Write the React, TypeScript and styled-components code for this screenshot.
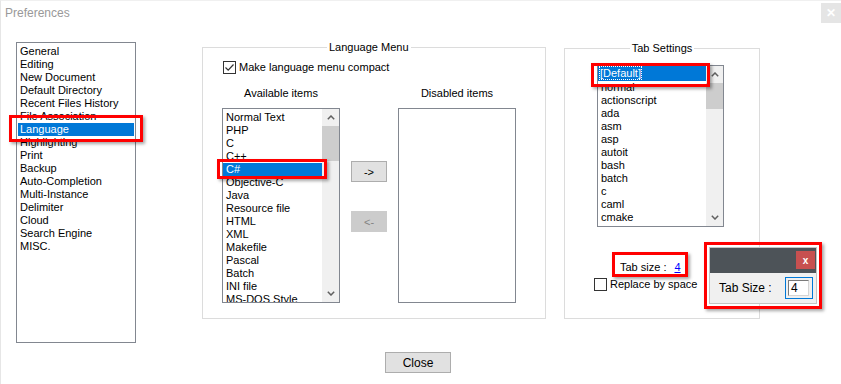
import styled, { createGlobalStyle } from 'styled-components';

const GlobalStyle = createGlobalStyle`
  html, body {
    margin: 0;
    padding: 0;
    background: #ffffff;
  }
  body {
    font-family: 'Liberation Sans', Arial, sans-serif;
    font-size: 11px;
    color: #000000;
  }
`;

const Window = styled.div`
  position: relative;
  width: 841px;
  height: 384px;
  background: #ffffff;
  box-sizing: border-box;
  border-left: 1px solid #e6e6e6;
  border-top: 1px solid #f0f0f0;
  overflow: hidden;
`;

const TitleBar = styled.div`
  display: flex;
  justify-content: space-between;
  align-items: flex-start;
  height: 39px;
  padding: 2px 0 0 4px;
  box-sizing: border-box;
`;

const TitleText = styled.span`
  font-size: 12px;
  line-height: 20px;
  color: #999999;
`;

const WinClose = styled.div`
  width: 20px;
  height: 20px;
  background: #e5e5e5;
  display: flex;
  align-items: center;
  justify-content: center;
  color: #ffffff;
  font-weight: 700;
  font-size: 12px;
`;

const Content = styled.div`
  display: flex;
  align-items: flex-start;
  padding-left: 15px;
`;

const ListBox = styled.div<{ $w: number; $h: number; $mt?: number; $ml?: number }>`
  width: ${(p) => p.$w}px;
  height: ${(p) => p.$h}px;
  margin-top: ${(p) => p.$mt ?? 0}px;
  margin-left: ${(p) => p.$ml ?? 0}px;
  border: 1px solid #828790;
  box-sizing: border-box;
  background: #ffffff;
  display: flex;
  overflow: hidden;
  flex-shrink: 0;
`;

const Items = styled.div<{ $pt: number; $px: number }>`
  flex: 1;
  padding: ${(p) => p.$pt}px ${(p) => p.$px}px 0;
  min-width: 0;
`;

const Item = styled.div<{ $sel?: boolean; $pl: number; $h?: number }>`
  height: ${(p) => p.$h ?? 13}px;
  line-height: ${(p) => p.$h ?? 13}px;
  padding-left: ${(p) => p.$pl}px;
  white-space: nowrap;
  background: ${(p) => (p.$sel ? '#0078d7' : 'transparent')};
  color: ${(p) => (p.$sel ? '#ffffff' : '#000000')};
`;

const FocusText = styled.span`
  outline: 1px dotted #ffffff;
  outline-offset: 0;
`;

const ScrollBar = styled.div`
  width: 17px;
  background: #f0f0f0;
  display: flex;
  flex-direction: column;
  flex-shrink: 0;
`;

const ScrollArrow = styled.div`
  height: 17px;
  display: flex;
  align-items: center;
  justify-content: center;
  flex-shrink: 0;
`;

const ScrollTrack = styled.div`
  flex: 1;
`;

const ScrollThumb = styled.div<{ $h: number }>`
  height: ${(p) => p.$h}px;
  background: #cdcdcd;
`;

const GroupBox = styled.fieldset<{ $w: number; $h: number; $ml: number; $mt: number }>`
  width: ${(p) => p.$w}px;
  height: ${(p) => p.$h}px;
  margin: ${(p) => p.$mt}px 0 0 ${(p) => p.$ml}px;
  padding: 0;
  border: 1px solid #dcdcdc;
  box-sizing: border-box;
  min-width: 0;
  flex-shrink: 0;
`;

const Legend = styled.legend<{ $ml?: number }>`
  padding: 0 2px;
  line-height: 13px;
  font-size: 11px;
  margin-left: ${(p) => (p.$ml !== undefined ? `${p.$ml}px` : 'auto')};
  margin-right: auto;
`;

const CheckRow = styled.label<{ $mt: number; $ml: number }>`
  display: flex;
  align-items: center;
  gap: 3px;
  height: 13px;
  line-height: 13px;
  margin: ${(p) => p.$mt}px 0 0 ${(p) => p.$ml}px;
  white-space: nowrap;
`;

const CheckBox = styled.span`
  width: 13px;
  height: 13px;
  border: 1px solid #333333;
  box-sizing: border-box;
  background: #ffffff;
  display: flex;
  align-items: center;
  justify-content: center;
  flex-shrink: 0;
`;

const Columns = styled.div`
  display: flex;
  align-items: flex-start;
  margin-top: 13px;
  padding-left: 19px;
`;

const Column = styled.div`
  display: flex;
  flex-direction: column;
  align-items: center;
  gap: 8px;
`;

const ColumnHead = styled.div`
  line-height: 13px;
  height: 13px;
  white-space: nowrap;
`;

const MoveButtons = styled.div`
  display: flex;
  flex-direction: column;
  gap: 29px;
  margin: 74px 11px 0;
`;

const SmallButton = styled.div<{ $disabled?: boolean }>`
  width: 36px;
  height: 21px;
  box-sizing: border-box;
  border: 1px solid ${(p) => (p.$disabled ? '#cccccc' : '#adadad')};
  background: ${(p) => (p.$disabled ? '#cccccc' : '#e1e1e1')};
  color: ${(p) => (p.$disabled ? '#838383' : '#000000')};
  display: flex;
  align-items: center;
  justify-content: center;
  font-size: 11px;
`;

const TabSizeRow = styled.div`
  display: flex;
  gap: 8px;
  height: 13px;
  line-height: 13px;
  margin: 34px 0 0 55px;
`;

const LinkText = styled.span`
  color: #0000ff;
  text-decoration: underline;
`;

const Footer = styled.div`
  display: flex;
  justify-content: center;
  padding-right: 6px;
  margin-top: 9px;
`;

const Button = styled.div`
  width: 66px;
  height: 21px;
  box-sizing: border-box;
  border: 1px solid #adadad;
  background: #e1e1e1;
  display: flex;
  align-items: center;
  justify-content: center;
  font-size: 12px;
`;

const Highlight = styled.div<{ $x: number; $y: number; $w: number; $h: number }>`
  position: absolute;
  left: ${(p) => p.$x}px;
  top: ${(p) => p.$y}px;
  width: ${(p) => p.$w}px;
  height: ${(p) => p.$h}px;
  box-sizing: border-box;
  border: 3px solid #ff0000;
  box-shadow: 2px 2px 3px rgba(0, 0, 0, 0.35);
  padding: 2px;
`;

const Popup = styled.div`
  width: 100%;
  height: 100%;
  box-sizing: border-box;
  border: 1px solid #c4c4c4;
  background: #f0f0f0;
  display: flex;
  flex-direction: column;
`;

const PopupBar = styled.div`
  height: 25px;
  background: #4d5358;
  display: flex;
  justify-content: flex-end;
  align-items: flex-start;
  padding: 3px 1px 0 0;
  box-sizing: border-box;
`;

const PopupClose = styled.div`
  width: 19px;
  height: 18px;
  background: #c75050;
  color: #ffffff;
  font-weight: 700;
  font-size: 10px;
  display: flex;
  align-items: center;
  justify-content: center;
`;

const PopupBody = styled.div`
  display: flex;
  align-items: center;
  justify-content: space-between;
  flex: 1;
  padding: 0 3px 0 9px;
  font-size: 12px;
`;

const FocusRing = styled.div`
  border: 1px solid #0078d7;
  padding: 2px 3px 2px 2px;
  display: flex;
`;

const NumberBox = styled.div`
  width: 21px;
  height: 16px;
  box-sizing: border-box;
  border: 1px solid #7a7a7a;
  border-right-color: #d5d5d5;
  border-bottom-color: #d5d5d5;
  background: #ffffff;
  line-height: 14px;
  padding-left: 2px;
  font-size: 12px;
`;

const Chevron = ({ down }: { down?: boolean }) => (
  <svg width="8" height="5" viewBox="0 0 8 5">
    <path
      d={down ? 'M0.8 0.8 L4 4 L7.2 0.8' : 'M0.8 4.2 L4 1 L7.2 4.2'}
      fill="none"
      stroke="#606060"
      strokeWidth="1.5"
    />
  </svg>
);

const Check = () => (
  <svg width="11" height="11" viewBox="0 0 11 11">
    <path d="M1.5 5.5 L4.2 8.2 L9.5 2.5" fill="none" stroke="#333333" strokeWidth="1.2" />
  </svg>
);

function Scroller({ thumb }: { thumb: number }) {
  return (
    <ScrollBar>
      <ScrollArrow>
        <Chevron />
      </ScrollArrow>
      <ScrollTrack>
        <ScrollThumb $h={thumb} />
      </ScrollTrack>
      <ScrollArrow>
        <Chevron down />
      </ScrollArrow>
    </ScrollBar>
  );
}

const categories = [
  'General',
  'Editing',
  'New Document',
  'Default Directory',
  'Recent Files History',
  'File Association',
  'Language',
  'Highlighting',
  'Print',
  'Backup',
  'Auto-Completion',
  'Multi-Instance',
  'Delimiter',
  'Cloud',
  'Search Engine',
  'MISC.',
];

const available = [
  'Normal Text',
  'PHP',
  'C',
  'C++',
  'C#',
  'Objective-C',
  'Java',
  'Resource file',
  'HTML',
  'XML',
  'Makefile',
  'Pascal',
  'Batch',
  'INI file',
  'MS-DOS Style',
];

const tabLangs = [
  'normal',
  'actionscript',
  'ada',
  'asm',
  'asp',
  'autoit',
  'bash',
  'batch',
  'c',
  'caml',
  'cmake',
  'cobol',
];

export default function App() {
  return (
    <>
      <GlobalStyle />
      <Window>
        <TitleBar>
          <TitleText>Preferences</TitleText>
          <WinClose>✕</WinClose>
        </TitleBar>

        <Content>
          <ListBox $w={120} $h={301} $mt={2}>
            <Items $pt={2} $px={1}>
              {categories.map((c) => (
                <Item key={c} $pl={2} $sel={c === 'Language'}>
                  {c}
                </Item>
              ))}
            </Items>
          </ListBox>

          <GroupBox $w={344} $h={278} $ml={66} $mt={1}>
            <Legend $ml={124}>Language Menu</Legend>
            <CheckRow $mt={7} $ml={20}>
              <CheckBox>
                <Check />
              </CheckBox>
              Make language menu compact
            </CheckRow>
            <Columns>
              <Column>
                <ColumnHead>Available items</ColumnHead>
                <ListBox $w={118} $h={195}>
                  <Items $pt={2} $px={0}>
                    {available.map((a) => (
                      <Item key={a} $pl={3} $sel={a === 'C#'}>
                        {a}
                      </Item>
                    ))}
                  </Items>
                  <Scroller thumb={35} />
                </ListBox>
              </Column>
              <MoveButtons>
                <SmallButton>-&gt;</SmallButton>
                <SmallButton $disabled>&lt;-</SmallButton>
              </MoveButtons>
              <Column>
                <ColumnHead>Disabled items</ColumnHead>
                <ListBox $w={118} $h={195} />
              </Column>
            </Columns>
          </GroupBox>

          <GroupBox $w={196} $h={277} $ml={18} $mt={2}>
            <Legend>Tab Settings</Legend>
            <ListBox $w={127} $h={162} $mt={10} $ml={32}>
              <Items $pt={0} $px={0}>
                <Item $pl={2} $h={15} $sel>
                  <FocusText>[Default]</FocusText>
                </Item>
                {tabLangs.map((t) => (
                  <Item key={t} $pl={3}>
                    {t}
                  </Item>
                ))}
              </Items>
              <Scroller thumb={26} />
            </ListBox>
            <TabSizeRow>
              <span>Tab size :</span>
              <LinkText>4</LinkText>
            </TabSizeRow>
            <CheckRow $mt={4} $ml={29}>
              <CheckBox />
              Replace by space
            </CheckRow>
          </GroupBox>
        </Content>

        <Footer>
          <Button>Close</Button>
        </Footer>

        <Highlight $x={8} $y={114} $w={134} $h={27} />
        <Highlight $x={216} $y={158} $w={110} $h={20} />
        <Highlight $x={590} $y={62} $w={119} $h={24} />
        <Highlight $x={611} $y={251} $w={76} $h={25} />
        <Highlight $x={703} $y={241} $w={118} $h={67}>
          <Popup>
            <PopupBar>
              <PopupClose>x</PopupClose>
            </PopupBar>
            <PopupBody>
              <span>Tab Size :</span>
              <FocusRing>
                <NumberBox>4</NumberBox>
              </FocusRing>
            </PopupBody>
          </Popup>
        </Highlight>
      </Window>
    </>
  );
}
